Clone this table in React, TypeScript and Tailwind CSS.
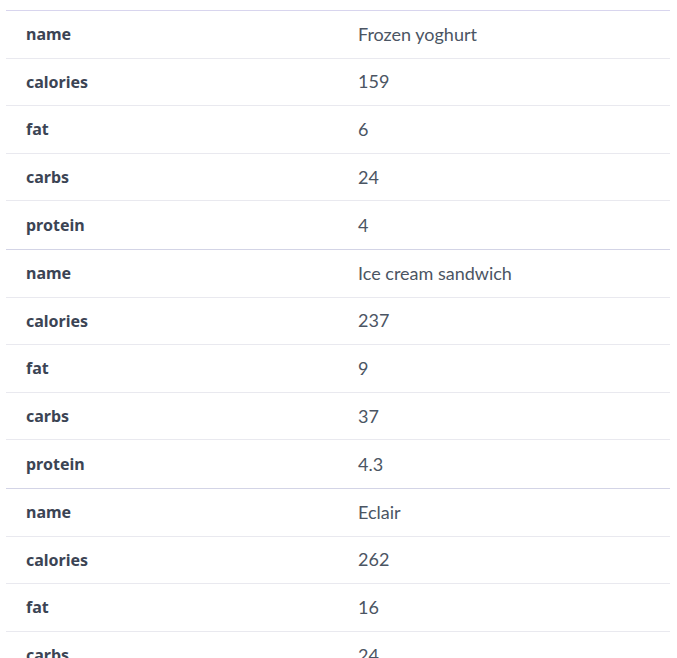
import React from "react";

const data = [
  { name: "Frozen yoghurt", calories: "159", fat: "6", carbs: "24", protein: "4" },
  { name: "Ice cream sandwich", calories: "237", fat: "9", carbs: "37", protein: "4.3" },
  { name: "Eclair", calories: "262", fat: "16", carbs: "24", protein: "6" },
];

const keys = ["name", "calories", "fat", "carbs", "protein"] as const;

export default function App() {
  return (
    <div className="w-[677px] h-[658px] overflow-hidden bg-white">
      <div className="mx-[6px] mt-[10px] w-[664px]">
        {data.map((row, gi) => (
          <div key={gi} className={gi === 0 ? "border-t border-[#d8d5ee]" : "border-t border-[#d3d4e6]"}>
            {keys.map((k, i) => (
              <div
                key={k}
                className={
                  "grid grid-cols-2 h-[47.6px] items-center " +
                  (i < keys.length - 1 ? "border-b border-[#e9e9ef]" : "")
                }
              >
                <div
                  className="px-5 text-[16px] font-bold text-[#3b4454]"
                  style={{ fontFamily: "'Noto Sans', 'Open Sans', sans-serif" }}
                >
                  {k}
                </div>
                <div
                  className="px-5 text-[18px] text-[#4b5563]"
                  style={{ fontFamily: "Lato, 'Noto Sans', sans-serif" }}
                >
                  {row[k]}
                </div>
              </div>
            ))}
          </div>
        ))}
      </div>
    </div>
  );
}
